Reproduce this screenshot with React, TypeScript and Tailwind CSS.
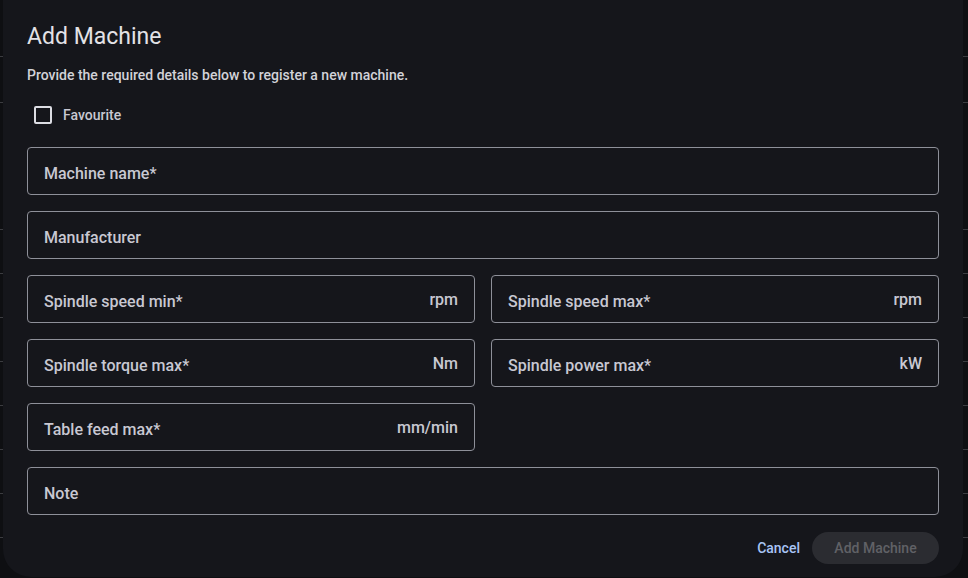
const fieldRows: { label: string; unit?: string }[][] = [
  [{ label: "Machine name*" }],
  [{ label: "Manufacturer" }],
  [
    { label: "Spindle speed min*", unit: "rpm" },
    { label: "Spindle speed max*", unit: "rpm" },
  ],
  [
    { label: "Spindle torque max*", unit: "Nm" },
    { label: "Spindle power max*", unit: "kW" },
  ],
  [{ label: "Table feed max*", unit: "mm/min" }],
  [{ label: "Note" }],
];

const Field = ({ label, unit }: { label: string; unit?: string }) => (
  <div className="h-12 flex items-center justify-between px-4 pt-[5px] border border-[#8e9099] rounded-[4px] text-[16px] font-medium text-[#c8c8d2]">
    <span>{label}</span>
    {unit && <span className="-mt-[3px]">{unit}</span>}
  </div>
);

const App = () => {
  return (
    <div
      className="relative w-[968px] h-[578px] overflow-hidden bg-[#0e0f12]"
      style={{ fontFamily: "Roboto, 'Liberation Sans', sans-serif" }}
    >
      {/* table rows peeking out behind the dialog */}
      <div className="flex flex-col pt-[13px]">
        <div className="h-[44px] border-b border-[#3b3c40]" />
        <div className="h-[46px] border-b border-[#3b3c40]" />
        <div className="h-[83px]" />
        {Array.from({ length: 8 }).map((_, i) => (
          <div key={i} className="h-[44px] border-b border-[#3b3c40]" />
        ))}
      </div>

      <div className="absolute left-[3px] top-0 w-[960px] h-[577px] rounded-b-[28px] bg-[#15161b] px-6 pt-[21px]">
        <h2 className="text-[23px] leading-8 text-[#e3e2e6]">Add Machine</h2>
        <p className="mt-[12px] text-[14px] leading-5 font-medium text-[#d2d2d8]">
          Provide the required details below to register a new machine.
        </p>

        <label className="mt-5 flex items-center h-5 pl-[7px] gap-[11px]">
          <span className="w-[18px] h-[18px] border-2 border-[#dcdde3] rounded-[2px]" />
          <span className="text-[14px] font-medium text-[#c8c8d2]">Favourite</span>
        </label>

        <div className="mt-[22px] flex flex-col gap-4">
          {fieldRows.map((row, i) => (
            <div key={i} className={row[0].unit ? "grid grid-cols-2 gap-4" : "grid grid-cols-1"}>
              {row.map((f, j) => (
                <Field key={j} label={f.label} unit={f.unit} />
              ))}
            </div>
          ))}
        </div>

        <div className="mt-[17px] flex justify-end items-center">
          <button className="h-8 pr-3 text-[14px] font-medium text-[#a8c4f5]">Cancel</button>
          <button className="h-8 w-[127px] rounded-full bg-[#2b2c31] text-[14px] font-medium text-[#606166]">
            Add Machine
          </button>
        </div>
      </div>
    </div>
  );
};

export default App;
